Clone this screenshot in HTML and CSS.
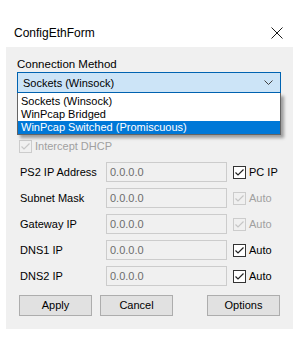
FILE: index.html
```html
<!DOCTYPE html>
<html>
<head lang="en">
    <meta charset="UTF-8">
    <title>ConfigEthForm</title>
    <link rel="stylesheet" href="styles.css">
</head>
<body>
    <div class="titlebar">
        <span class="caption">ConfigEthForm</span>
        <svg class="close" width="12" height="12" viewBox="0 0 12 12">
            <path d="M0.5 0.5 L11.5 11.5 M11.5 0.5 L0.5 11.5" stroke="#1a1a1a" stroke-width="1" fill="none"/>
        </svg>
    </div>
    <div class="panel">
        <div class="groupLabel">Connection Method</div>
        <div class="combo">
            <span>Sockets (Winsock)</span>
            <svg class="chevron" width="9" height="5" viewBox="0 0 9 5">
                <path d="M0.5 0.5 L4.5 4.5 L8.5 0.5" stroke="#404040" stroke-width="1" fill="none"/>
            </svg>
        </div>
        <div class="dropList">
            <div class="item">Sockets (Winsock)</div>
            <div class="item">WinPcap Bridged</div>
            <div class="item selected">WinPcap Switched (Promiscuous)</div>
        </div>
        <div class="check disabled dhcp"><span class="box"><svg viewBox="0 0 11 11"><path d="M1.5 5.5 L4 8 L9.5 2.5"/></svg></span>Intercept DHCP</div>
        <div class="row">
            <label>PS2 IP Address</label>
            <div class="textbox">0.0.0.0</div>
            <div class="check"><span class="box"><svg viewBox="0 0 11 11"><path d="M1.5 5.5 L4 8 L9.5 2.5"/></svg></span>PC IP</div>
        </div>
        <div class="row">
            <label>Subnet Mask</label>
            <div class="textbox">0.0.0.0</div>
            <div class="check disabled"><span class="box"><svg viewBox="0 0 11 11"><path d="M1.5 5.5 L4 8 L9.5 2.5"/></svg></span>Auto</div>
        </div>
        <div class="row">
            <label>Gateway IP</label>
            <div class="textbox">0.0.0.0</div>
            <div class="check disabled"><span class="box"><svg viewBox="0 0 11 11"><path d="M1.5 5.5 L4 8 L9.5 2.5"/></svg></span>Auto</div>
        </div>
        <div class="row">
            <label>DNS1 IP</label>
            <div class="textbox">0.0.0.0</div>
            <div class="check"><span class="box"><svg viewBox="0 0 11 11"><path d="M1.5 5.5 L4 8 L9.5 2.5"/></svg></span>Auto</div>
        </div>
        <div class="row">
            <label>DNS2 IP</label>
            <div class="textbox">0.0.0.0</div>
            <div class="check"><span class="box"><svg viewBox="0 0 11 11"><path d="M1.5 5.5 L4 8 L9.5 2.5"/></svg></span>Auto</div>
        </div>
        <div class="buttons">
            <div class="button">Apply</div>
            <div class="button">Cancel</div>
            <div class="button options">Options</div>
        </div>
    </div>
</body>
</html>
```

FILE: styles.css
```css
body {
    margin: 0;
    background: white;
    font-family: "Liberation Sans", Arial, sans-serif;
    font-size: 11px;
    color: black;
}
.titlebar {
    height: 47px;
    box-sizing: border-box;
    padding: 19px 17px 0 14px;
    display: flex;
    align-items: center;
    justify-content: space-between;
}
.caption {
    font-size: 12px;
    line-height: 28px;
}
.close {
    display: block;
}
.panel {
    position: relative;
    margin: 0 7px 0 6px;
    background: #f0f0f0;
    padding: 10px 0 13px 11px;
}
.groupLabel {
    font-size: 11.5px;
    line-height: 14px;
}
.combo {
    margin-top: 1px;
    width: 264px;
    height: 21px;
    box-sizing: border-box;
    border: 1px solid #0063b1;
    background: #cce4f7;
    display: flex;
    align-items: center;
    justify-content: space-between;
    padding: 0 7px 0 5px;
}
.dropList {
    position: absolute;
    left: 11px;
    top: 46px;
    width: 264px;
    box-sizing: border-box;
    border: 1px solid #646464;
    border-top: none;
    background: white;
    box-shadow: 3px 3px 3px rgba(0, 0, 0, 0.35);
    z-index: 2;
}
.dropList .item {
    height: 13px;
    line-height: 13px;
    padding: 0 3px;
}
.dropList .item:first-child {
    margin-top: 2px;
}
.dropList .selected {
    background: #0078d7;
    color: white;
}
.check {
    display: flex;
    align-items: center;
    line-height: 14px;
}
.check .box {
    width: 11px;
    height: 11px;
    border: 1px solid #333;
    background: white;
    margin-right: 3px;
}
.check .box svg {
    display: block;
    width: 11px;
    height: 11px;
    fill: none;
    stroke: #222;
    stroke-width: 1.2;
}
.check.disabled {
    color: #a0a0a0;
}
.check.disabled .box {
    border-color: #cccccc;
    background: #f0f0f0;
}
.check.disabled .box svg {
    stroke: #c6c6c6;
}
.dhcp {
    margin: 46px 0 0 2px;
}
.row {
    display: flex;
    align-items: center;
    height: 20px;
    margin-top: 6px;
    padding-left: 3px;
}
.dhcp + .row {
    margin-top: 9px;
}
.row label {
    width: 86px;
}
.textbox {
    width: 121px;
    height: 20px;
    box-sizing: border-box;
    border: 1px solid #cccccc;
    background: #f0f0f0;
    color: #6d6d6d;
    padding-left: 3px;
    line-height: 18px;
    margin-right: 6px;
}
.buttons {
    display: flex;
    margin-top: 9px;
    padding-left: 2px;
}
.button {
    width: 73px;
    height: 21px;
    box-sizing: border-box;
    border: 1px solid #adadad;
    background: #e1e1e1;
    text-align: center;
    line-height: 19px;
    margin-right: 8px;
}
.button.options {
    margin-left: 26px;
}
```
